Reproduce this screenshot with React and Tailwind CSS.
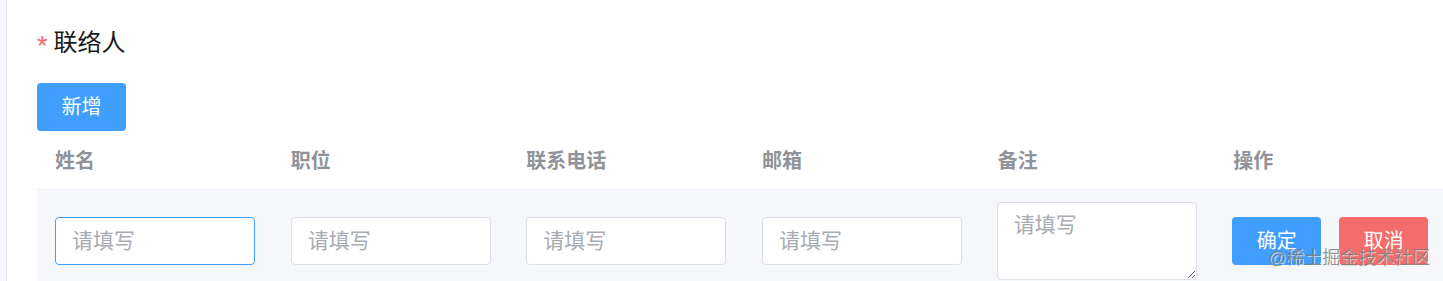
import { useState } from "react";

const cols = ["姓名", "职位", "联系电话", "邮箱", "备注", "操作"];

function TextInput({ focused }) {
  return (
    <input
      type="text"
      placeholder="请填写"
      className={`w-[200px] h-[48px] rounded-[4px] border bg-white px-[16px] text-[21px] text-[#606266] placeholder:text-[#a8abb2] outline-none ${
        focused ? "border-[#409eff]" : "border-[#dcdfe6]"
      }`}
    />
  );
}

export default function App() {
  const [rows] = useState([{}]);

  return (
    <div
      className="relative flex h-[281px] w-[1443px] overflow-hidden bg-white"
      style={{ fontFamily: '"Liberation Sans", "Noto Sans CJK SC", sans-serif' }}
    >
      <div className="w-[7px] shrink-0 bg-[#f5f7fa] border-r border-[#e4e7ed]" />

      <div className="flex-1 pl-[30px] pt-[28px]">
        <div className="flex h-[30px] items-center">
          <span className="mr-[6px] mt-[6px] text-[27px] leading-none text-[#f56c6c]">*</span>
          <span className="text-[24px] leading-[30px] text-[#1a1a1a]">联络人</span>
        </div>

        <button className="mt-[25px] h-[48px] w-[89px] rounded-[4px] bg-[#409eff] text-[20px] text-white">
          新增
        </button>

        <div className="w-[1414px]">
          <div className="grid h-[59px] grid-cols-6 items-center border-b border-[#ebeef5] pt-[2px]">
            {cols.map((c) => (
              <div key={c} className="pl-[18px] text-[20px] font-bold text-[#909399]">
                {c}
              </div>
            ))}
          </div>

          {rows.map((r, i) => (
            <div key={i} className="grid h-[102px] grid-cols-6 items-center bg-[#f5f7fa]">
              <div className="pl-[18px]">
                <TextInput focused />
              </div>
              <div className="pl-[18px]">
                <TextInput />
              </div>
              <div className="pl-[18px]">
                <TextInput />
              </div>
              <div className="pl-[18px]">
                <TextInput />
              </div>
              <div className="pl-[17px]">
                <textarea
                  placeholder="请填写"
                  className="block h-[78px] w-[200px] rounded-[4px] border border-[#dcdfe6] bg-white px-[16px] py-[7px] text-[21px] leading-[30px] text-[#606266] placeholder:text-[#a8abb2] outline-none resize"
                />
              </div>
              <div className="flex gap-[18px] pl-[17px]">
                <button className="h-[48px] w-[89px] rounded-[4px] bg-[#409eff] text-[20px] text-white">
                  确定
                </button>
                <button className="h-[48px] w-[89px] rounded-[4px] bg-[#f56c6c] text-[20px] text-white">
                  取消
                </button>
              </div>
            </div>
          ))}
        </div>
      </div>

      {/* watermark */}
      <div className="absolute left-[1268px] top-[246px] text-[18px] leading-[24px] text-[#7a7a7a]/80 [text-shadow:1px_1px_0_rgba(255,255,255,0.6)]">
        @稀土掘金技术社区
      </div>
    </div>
  );
}
